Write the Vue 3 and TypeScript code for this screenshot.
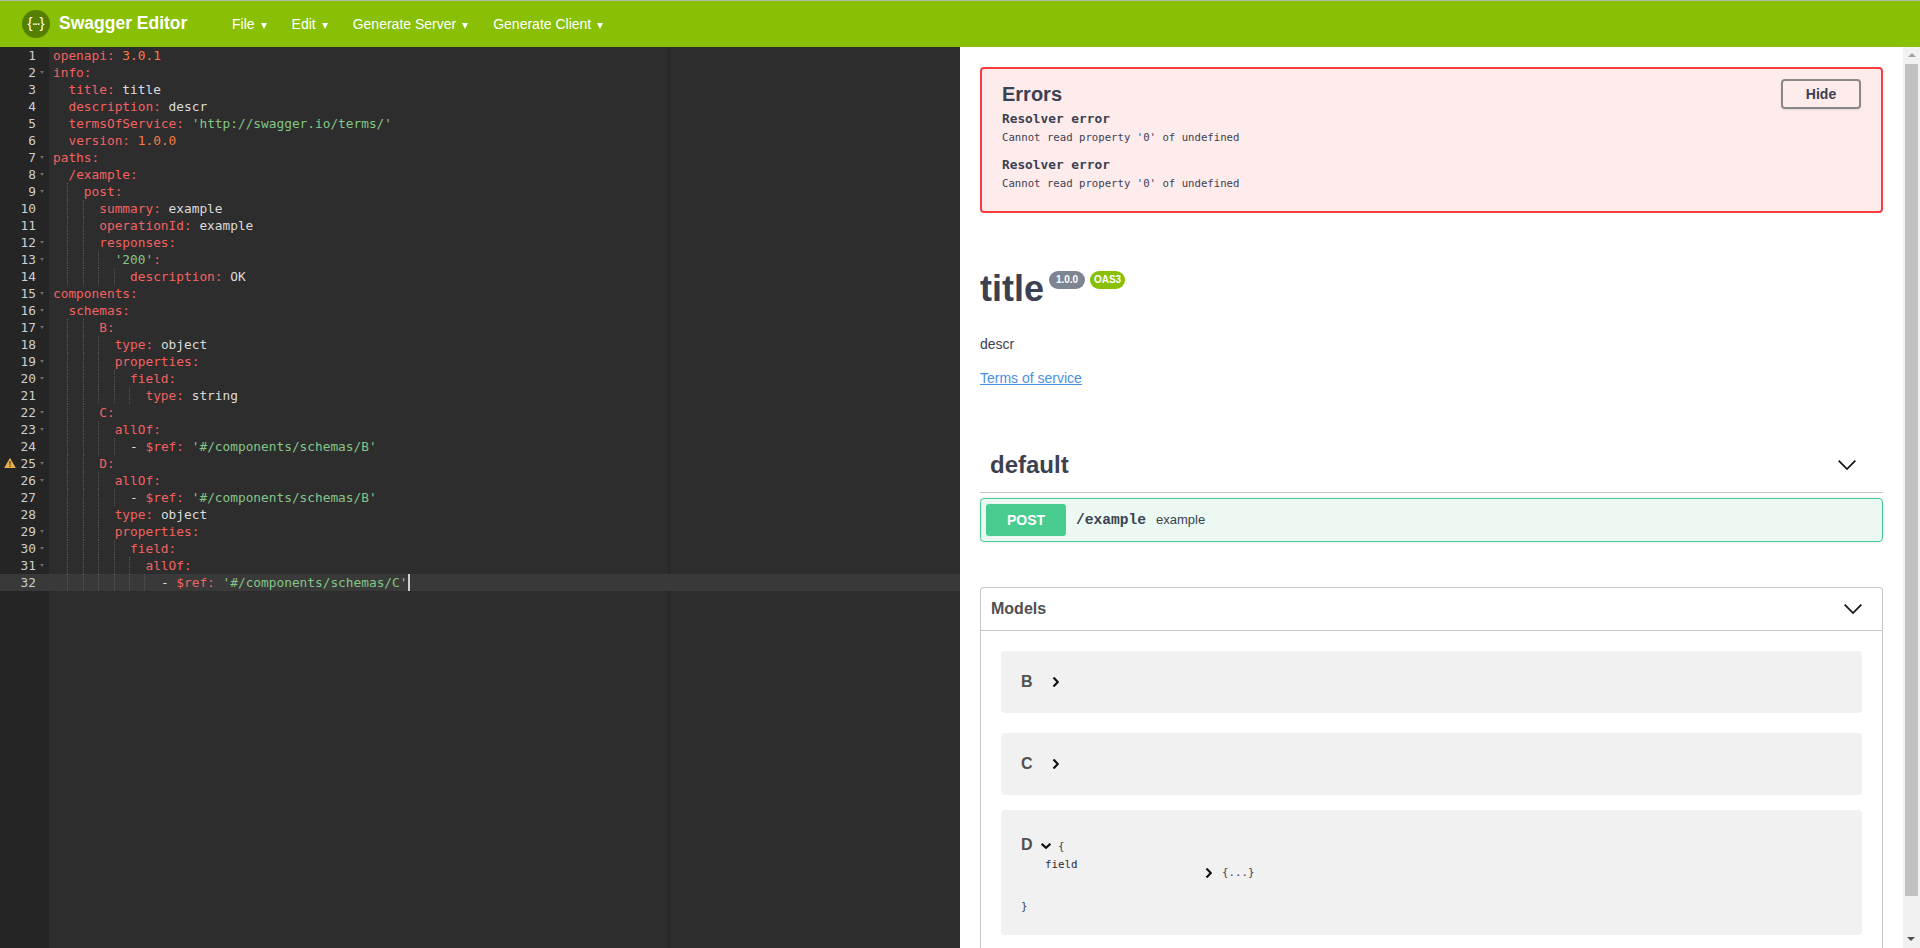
<script setup lang="ts">
type Tok = { t: string; c: string }
const CH = 7.7
const lines: { indent: number; fold: boolean; toks: Tok[] }[] = [
  { indent: 0, fold: false, toks: [{ t: 'openapi:', c: 'k' }, { t: ' ', c: 'p' }, { t: '3.0.1', c: 'n' }] },
  { indent: 0, fold: true, toks: [{ t: 'info:', c: 'k' }] },
  { indent: 2, fold: false, toks: [{ t: 'title:', c: 'k' }, { t: ' title', c: 'p' }] },
  { indent: 2, fold: false, toks: [{ t: 'description:', c: 'k' }, { t: ' descr', c: 'p' }] },
  { indent: 2, fold: false, toks: [{ t: 'termsOfService:', c: 'k' }, { t: ' ', c: 'p' }, { t: "'http://swagger.io/terms/'", c: 's' }] },
  { indent: 2, fold: false, toks: [{ t: 'version:', c: 'k' }, { t: ' ', c: 'p' }, { t: '1.0.0', c: 'n' }] },
  { indent: 0, fold: true, toks: [{ t: 'paths:', c: 'k' }] },
  { indent: 2, fold: true, toks: [{ t: '/example:', c: 'k' }] },
  { indent: 4, fold: true, toks: [{ t: 'post:', c: 'k' }] },
  { indent: 6, fold: false, toks: [{ t: 'summary:', c: 'k' }, { t: ' example', c: 'p' }] },
  { indent: 6, fold: false, toks: [{ t: 'operationId:', c: 'k' }, { t: ' example', c: 'p' }] },
  { indent: 6, fold: true, toks: [{ t: 'responses:', c: 'k' }] },
  { indent: 8, fold: true, toks: [{ t: "'200'", c: 's' }, { t: ':', c: 'k' }] },
  { indent: 10, fold: false, toks: [{ t: 'description:', c: 'k' }, { t: ' OK', c: 'p' }] },
  { indent: 0, fold: true, toks: [{ t: 'components:', c: 'k' }] },
  { indent: 2, fold: true, toks: [{ t: 'schemas:', c: 'k' }] },
  { indent: 6, fold: true, toks: [{ t: 'B:', c: 'k' }] },
  { indent: 8, fold: false, toks: [{ t: 'type:', c: 'k' }, { t: ' object', c: 'p' }] },
  { indent: 8, fold: true, toks: [{ t: 'properties:', c: 'k' }] },
  { indent: 10, fold: true, toks: [{ t: 'field:', c: 'k' }] },
  { indent: 12, fold: false, toks: [{ t: 'type:', c: 'k' }, { t: ' string', c: 'p' }] },
  { indent: 6, fold: true, toks: [{ t: 'C:', c: 'k' }] },
  { indent: 8, fold: true, toks: [{ t: 'allOf:', c: 'k' }] },
  { indent: 10, fold: false, toks: [{ t: '- ', c: 'p' }, { t: '$ref:', c: 'k' }, { t: ' ', c: 'p' }, { t: "'#/components/schemas/B'", c: 's' }] },
  { indent: 6, fold: true, toks: [{ t: 'D:', c: 'k' }] },
  { indent: 8, fold: true, toks: [{ t: 'allOf:', c: 'k' }] },
  { indent: 10, fold: false, toks: [{ t: '- ', c: 'p' }, { t: '$ref:', c: 'k' }, { t: ' ', c: 'p' }, { t: "'#/components/schemas/B'", c: 's' }] },
  { indent: 8, fold: false, toks: [{ t: 'type:', c: 'k' }, { t: ' object', c: 'p' }] },
  { indent: 8, fold: true, toks: [{ t: 'properties:', c: 'k' }] },
  { indent: 10, fold: true, toks: [{ t: 'field:', c: 'k' }] },
  { indent: 12, fold: true, toks: [{ t: 'allOf:', c: 'k' }] },
  { indent: 14, fold: false, toks: [{ t: '- ', c: 'p' }, { t: '$ref:', c: 'k' }, { t: ' ', c: 'p' }, { t: "'#/components/schemas/C'", c: 's' }] },
]
const guides = (indent: number) => {
  const out: number[] = []
  for (let g = 2; g < indent; g += 2) out.push(g)
  return out
}
const menus = ['File', 'Edit', 'Generate Server', 'Generate Client']
</script>

<template>
  <div class="page">
    <header class="topbar">
      <div class="brand">
        <span class="logo">{<span class="dots">···</span>}</span>
        <span class="brand-name">Swagger Editor</span>
      </div>
      <nav class="menu">
        <span v-for="m in menus" :key="m" class="menu-item">{{ m }}<svg class="caret" viewBox="0 0 6 6" width="6" height="6"><path d="M0 0h6L3 6z" /></svg></span>
      </nav>
    </header>
    <main class="split">
      <section class="editor">
        <div class="gutter">
          <div v-for="(l, i) in lines" :key="i" class="gut-line" :class="{ active: i === 31 }">
            <svg v-if="i === 24" class="warn" viewBox="0 0 12 12" width="12" height="12">
              <path d="M6 .8 11.8 11H.2z" fill="#e8b04c" />
              <path d="M5.4 4h1.2l-.2 4h-.8zM5.4 8.8h1.2V10H5.4z" fill="#3a2a10" />
            </svg>
            <span class="num">{{ i + 1 }}</span>
            <span class="fold" :class="{ on: l.fold }"></span>
          </div>
        </div>
        <div class="code">
          <div class="margin"></div>
          <div v-for="(l, i) in lines" :key="i" class="code-line" :class="{ active: i === 31 }">
            <span v-for="g in guides(l.indent)" :key="g" class="guide" :style="{ left: 3 + g * CH + 'px' }"></span>
            <span class="ind">{{ ' '.repeat(l.indent) }}</span><span v-for="(tk, j) in l.toks" :key="j" :class="tk.c">{{ tk.t }}</span><span v-if="i === 31" class="cursor"></span>
          </div>
        </div>
      </section>
      <section class="docs">
        <div class="docs-body">
          <div class="errors">
            <button class="hide">Hide</button>
            <h4 class="err-title">Errors</h4>
            <div class="err">
              <h4>Resolver error</h4>
              <p>Cannot read property '0' of undefined</p>
            </div>
            <div class="err">
              <h4>Resolver error</h4>
              <p>Cannot read property '0' of undefined</p>
            </div>
          </div>
          <div class="info">
            <div class="title-row">
              <h2 class="title">title</h2>
              <span class="badge ver">1.0.0</span>
              <span class="badge oas">OAS3</span>
            </div>
            <p class="descr">descr</p>
            <a class="terms">Terms of service</a>
          </div>
          <div class="tag">
            <h3>default</h3>
            <svg class="chev" viewBox="0 0 18 10" width="18" height="10"><path d="M.7.7 9 9 17.3.7" /></svg>
          </div>
          <div class="op">
            <span class="method">POST</span>
            <span class="path">/example</span>
            <span class="summary">example</span>
          </div>
          <div class="models">
            <div class="models-head">
              <span>Models</span>
              <svg class="chev" viewBox="0 0 18 10" width="18" height="10"><path d="M.7.7 9 9 17.3.7" /></svg>
            </div>
            <div class="models-body">
              <div class="model short"><span class="mname">B</span><svg class="tri-r" viewBox="0 0 7 10" width="7" height="10"><path d="M1.5.5 5.8 5 1.5 9.5" /></svg></div>
              <div class="model short gap-c"><span class="mname">C</span><svg class="tri-r" viewBox="0 0 7 10" width="7" height="10"><path d="M1.5.5 5.8 5 1.5 9.5" /></svg></div>
              <div class="model d">
                <div class="d-head"><span class="mname up">D</span><svg class="tri-d" viewBox="0 0 10 6" width="10" height="6"><path d="M.6.8 5 4.8 9.4.8" /></svg><span class="mono">{</span></div>
                <div class="d-row">
                  <span class="mono field">field</span>
                  <span class="d-val"><svg class="tri-r" viewBox="0 0 7 10" width="7" height="10"><path d="M1.5.5 5.8 5 1.5 9.5" /></svg><span class="mono braces">{...}</span></span>
                </div>
                <div class="mono close">}</div>
              </div>
            </div>
          </div>
        </div>
        <div class="scrollbar">
          <span class="sb-up"></span>
          <div class="thumb"></div>
          <span class="sb-down"></span>
        </div>
      </section>
    </main>
  </div>
</template>

<style>
html, body { margin: 0; height: 100%; overflow: hidden; background: #fff; }
</style>

<style scoped>
.page { width: 1920px; height: 948px; overflow: hidden; display: flex; flex-direction: column; font-family: "Liberation Sans", Arial, sans-serif; }
.topbar { height: 46px; flex: none; background: #89bf04; border-top: 1px solid #b4b8a8; display: flex; align-items: center; }
.brand { display: flex; align-items: center; margin-left: 22px; width: 210px; flex: none; }
.logo { width: 28px; height: 28px; border-radius: 50%; background: #547f00; color: #fff; font: 400 15px/26px "Liberation Sans", sans-serif; text-align: center; flex: none; white-space: nowrap; }
.dots { font-size: 10px; letter-spacing: -1px; font-weight: 700; }
.brand-name { color: #fff; font-size: 17.5px; font-weight: 700; margin-left: 9px; position: relative; top: -1px; }
.menu { display: flex; }
.menu-item { color: #fff; font-size: 14px; margin-right: 25px; display: inline-flex; align-items: center; }
.caret { fill: #fff; margin-left: 6px; margin-top: 3px; }
.split { flex: 1; display: flex; min-height: 0; }
.editor { width: 960px; flex: none; display: flex; background: #2d2d2d; }
.gutter { width: 49px; flex: none; background: #252525; }
.gut-line { height: 17px; position: relative; color: #cfcfcf; font: 12.8px/17px "DejaVu Sans Mono", monospace; text-align: right; }
.gut-line.active { background: #393939; }
.num { position: absolute; right: 13px; top: 0; }
.fold.on { position: absolute; left: 40px; top: 7px; width: 0; height: 0; border-left: 2.5px solid transparent; border-right: 2.5px solid transparent; border-top: 3px solid #6a6a6a; }
.warn { position: absolute; left: 4px; top: 2px; }
.code { flex: 1; position: relative; }
.margin { position: absolute; left: 619px; top: 0; bottom: 0; width: 2px; background: #272727; }
.code-line { height: 17px; position: relative; padding-left: 4px; font: 12.8px/17px "DejaVu Sans Mono", monospace; white-space: pre; color: #dedede; }
.code-line.active { background: #393939; }
.ind { color: transparent; }
.guide { position: absolute; top: 0; bottom: 0; width: 0; border-left: 1px dotted #585858; }
.k { color: #f26262; }
.p { color: #dcdcdc; }
.n { color: #f97b45; }
.s { color: #84c688; }
.cursor { display: inline-block; width: 2px; height: 17px; background: #cfcfcf; vertical-align: top; margin-left: 1px; }

.docs { flex: 1; display: flex; min-width: 0; background: #fff; }
.docs-body { flex: 1; min-width: 0; padding: 20px 20px 0; }
.scrollbar { width: 17px; flex: none; background: #f1f1f1; position: relative; }
.sb-up { position: absolute; left: 5px; top: 6px; width: 0; height: 0; border-left: 4px solid transparent; border-right: 4px solid transparent; border-bottom: 4px solid #a3a3a3; }
.sb-down { position: absolute; left: 4px; bottom: 7px; width: 0; height: 0; border-left: 4px solid transparent; border-right: 4px solid transparent; border-top: 4px solid #505050; }
.thumb { position: absolute; left: 2px; right: 2px; top: 17px; height: 832px; background: #c1c1c1; }

.errors { position: relative; box-sizing: border-box; height: 146px; border: 2px solid #f93e3e; border-radius: 4px; background: #feebeb; padding: 14px 20px; color: #3b4151; }
.hide { position: absolute; right: 20px; top: 10px; width: 80px; height: 30px; border: 2px solid #888; border-radius: 4px; background: transparent; font: 700 14px "Liberation Sans", sans-serif; color: #3b4151; box-shadow: 0 1px 2px rgba(0,0,0,.1); padding: 0; }
.err-title { margin: 0; font-size: 20px; line-height: 23px; font-weight: 700; }
.err { margin-top: 4px; }
.err + .err { margin-top: 10px; }
.err h4 { margin: 0; font: 700 12.8px/17px "DejaVu Sans Mono", monospace; }
.err p { margin: 2px 0 0; font: 10.66px/17px "DejaVu Sans Mono", monospace; }

.info { margin-top: 55px; }
.title-row { display: flex; align-items: flex-start; height: 52px; }
.title { margin: 0; font-size: 36px; line-height: 42px; font-weight: 700; color: #3b4151; }
.badge { height: 18px; margin-top: 3px; border-radius: 9px; color: #fff; font-size: 10px; font-weight: 700; line-height: 18px; text-align: center; }
.ver { background: #7d8492; width: 36px; margin-left: 5px; }
.oas { background: #89bf04; width: 35px; margin-left: 5px; }
.descr { margin: 14px 0 0; font-size: 14px; line-height: 20px; color: #3b4151; }
.terms { display: block; margin-top: 14px; font-size: 14px; line-height: 20px; color: #4990e2; text-decoration: underline; }

.tag { margin-top: 57px; height: 40px; padding: 0 27px 7px 10px; border-bottom: 1px solid #c5c6cb; display: flex; align-items: center; justify-content: space-between; }
.tag h3 { margin: 0; font-size: 24px; font-weight: 700; color: #3b4151; }
.chev { fill: none; stroke: #111; stroke-width: 1.7; }
.op { margin-top: 5px; height: 44px; box-sizing: border-box; border: 1px solid #49cc90; border-radius: 4px; background: #ebf9f2; display: flex; align-items: center; padding: 0 5px; box-shadow: 0 0 3px rgba(0,0,0,.1); }
.method { width: 80px; height: 32px; background: #49cc90; border-radius: 3px; color: #fff; font-size: 14px; font-weight: 700; line-height: 32px; text-align: center; }
.path { margin-left: 10px; font: 700 14.6px "Liberation Mono", monospace; color: #3b4151; }
.summary { margin-left: 10px; padding-bottom: 2px; font-size: 13px; color: #3b4151; }
.models { margin-top: 45px; border: 1px solid #c5c6cb; border-radius: 4px 4px 0 0; border-bottom: none; height: 500px; }
.models-head { height: 42px; border-bottom: 1px solid #c5c6cb; display: flex; align-items: center; justify-content: space-between; padding: 0 20px 0 10px; font-size: 16px; font-weight: 700; color: #505050; }
.models-body { padding: 20px 20px 0; }
.model { background: #f1f1f1; border-radius: 4px; color: #505050; }
.short { height: 62px; display: flex; align-items: center; padding-left: 20px; margin-bottom: 20px; }
.gap-c { margin-bottom: 15px; }
.mname { font-size: 16px; font-weight: 700; width: 12px; }
.mname.up { padding-bottom: 2px; }
.tri-r { fill: none; stroke: #111; stroke-width: 2.2; flex: none; }
.short .tri-r { margin-left: 19px; }
.d { height: 125px; padding: 26px 20px 0; box-sizing: border-box; }
.d-head { display: flex; align-items: center; height: 20px; }
.tri-d { fill: none; stroke: #111; stroke-width: 2.2; flex: none; margin-left: 8px; margin-right: 7px; }
.mono { font: 10.8px/17px "DejaVu Sans Mono", monospace; color: #3b4151; }
.d-row { display: flex; padding-left: 24px; height: 42px; }
.field { width: 160px; flex: none; color: #262b3a; }
.d-val { margin-top: 8px; height: 17px; display: flex; align-items: center; gap: 10px; }
</style>
